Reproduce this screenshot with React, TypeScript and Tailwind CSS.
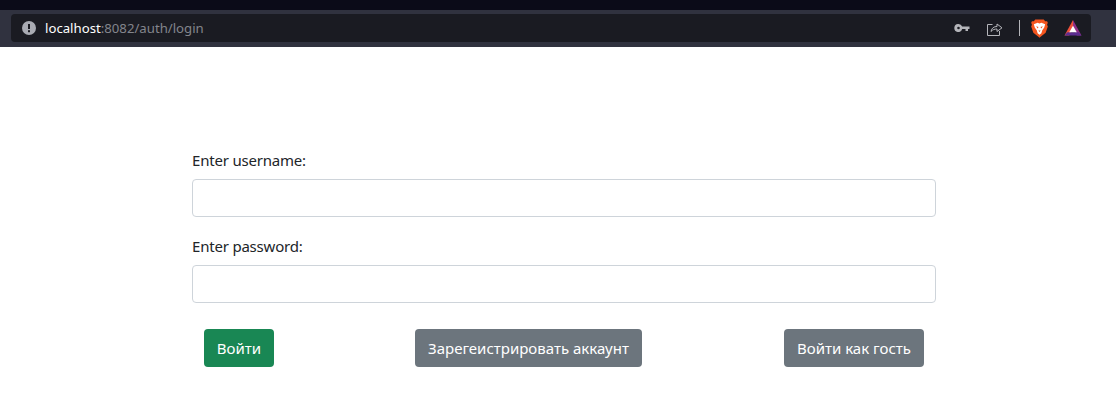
const font = { fontFamily: '"Noto Sans", "Open Sans", sans-serif' };

function BraveIcon() {
  return (
    <svg width="17" height="19" viewBox="0 0 18 20">
      <path d="M4.5 0.5 L13.5 0.5 L15 2.2 L17 2.2 L17.8 4 L17 6 L17.8 8 L15.5 14.5 L10.5 18.5 L9 19.8 L7.5 18.5 L2.5 14.5 L0.2 8 L1 6 L0.2 4 L1 2.2 L3 2.2 Z" fill="#f4551e" />
      <path d="M3 5.5 L7 4 L9 4.8 L11 4 L15 5.5 L14 9 L11.8 12 L11 15 L9 16.5 L7 15 L6.2 12 L4 9 Z" fill="#ffffff" />
      <path d="M5.5 7.5 L8 8.5 L7 10 Z M12.5 7.5 L10 8.5 L11 10 Z M7.8 12 L10.2 12 L9 13.8 Z" fill="#f4551e" />
    </svg>
  );
}

function RewardsIcon() {
  return (
    <svg width="18" height="16" viewBox="0 0 18 17">
      <path d="M9 0 L0 16.5 L5 16.5 L9 9 Z" fill="#f0503a" />
      <path d="M9 0 L18 16.5 L13 16.5 L9 9 Z" fill="#8f2f86" />
      <path d="M0 16.5 L18 16.5 L15 13 L3 13 Z" fill="#5c2d91" />
      <path d="M9 6 L13 13 L5 13 Z" fill="#ffffff" />
    </svg>
  );
}

function Toolbar() {
  return (
    <div>
      <div className="h-[10px] bg-[#0b0b18]" />
      <div className="h-[37px] bg-[#30323f] pt-[4px] pl-[11px]">
        <div className="w-[1080px] h-[28px] bg-[#1a1b22] rounded-[4px] flex items-center pl-[11px] pr-[9px]">
          <svg width="14" height="14" viewBox="0 0 14 14" className="shrink-0">
            <circle cx="7" cy="7" r="7" fill="#a9abb3" />
            <rect x="6" y="3" width="2" height="5" fill="#1a1b22" />
            <rect x="6" y="9.2" width="2" height="2" fill="#1a1b22" />
          </svg>
          <div className="ml-[9px] pt-[2px] text-[13.2px] text-[#83858c] leading-none">
            <span className="text-white">localhost</span>:8082/auth/login
          </div>
          <div className="ml-auto flex items-center">
            <svg width="16" height="8" viewBox="0 0 15 8">
              <path fillRule="evenodd" d="M4 0 A4 4 0 0 1 7.7 2.5 L15 2.5 L15 5 L13.5 5 L13.5 7 L11 7 L11 5 L7.7 5 A4 4 0 1 1 4 0 Z M4 2.7 A1.3 1.3 0 1 0 4 5.3 A1.3 1.3 0 1 0 4 2.7 Z" fill="#b4b5ba" />
            </svg>
            <svg width="16" height="15" viewBox="0 0 16 15" className="ml-[17px]" fill="none" stroke="#b4b5ba" strokeWidth="1">
              <path d="M5.5 3.5 H0.5 V14.5 H12.5 V10" />
              <path d="M4 10.5 C4.5 7 7 5.5 10 5.5 V3 L15 6.8 L10 10.5 V8 C8 8 5.5 8.5 4 10.5 Z" />
            </svg>
            <div className="ml-[16px] w-px h-[16px] bg-[#b4b5ba]" />
            <div className="ml-[11px]"><BraveIcon /></div>
            <div className="ml-[16px]"><RewardsIcon /></div>
          </div>
        </div>
      </div>
    </div>
  );
}

export default function App() {
  return (
    <div className="min-h-[407px] bg-white text-[#212529]" style={font}>
      <Toolbar />
      <form className="ml-[192px] w-[744px] pt-[101px] text-[15px]">
        <label className="block h-[31px] leading-[24px] tracking-[-0.2px]">Enter username:</label>
        <input className="block w-full h-[38px] border border-[#ced4da] rounded-[4px]" />
        <label className="block mt-[15px] h-[33px] leading-[28px] tracking-[-0.2px]">Enter password:</label>
        <input type="password" className="block w-full h-[38px] border border-[#ced4da] rounded-[4px]" />
        <div className="flex px-3 mt-[26px]">
          <button type="button" className="w-[70px] h-[38px] rounded-[4px] bg-[#198754] text-white">Войти</button>
          <button type="button" className="ml-[141px] w-[227px] h-[38px] rounded-[4px] bg-[#6c757d] text-white">Зарегеистрировать аккаунт</button>
          <button type="button" className="ml-auto w-[140px] h-[38px] rounded-[4px] bg-[#6c757d] text-white">Войти как гость</button>
        </div>
      </form>
    </div>
  );
}
